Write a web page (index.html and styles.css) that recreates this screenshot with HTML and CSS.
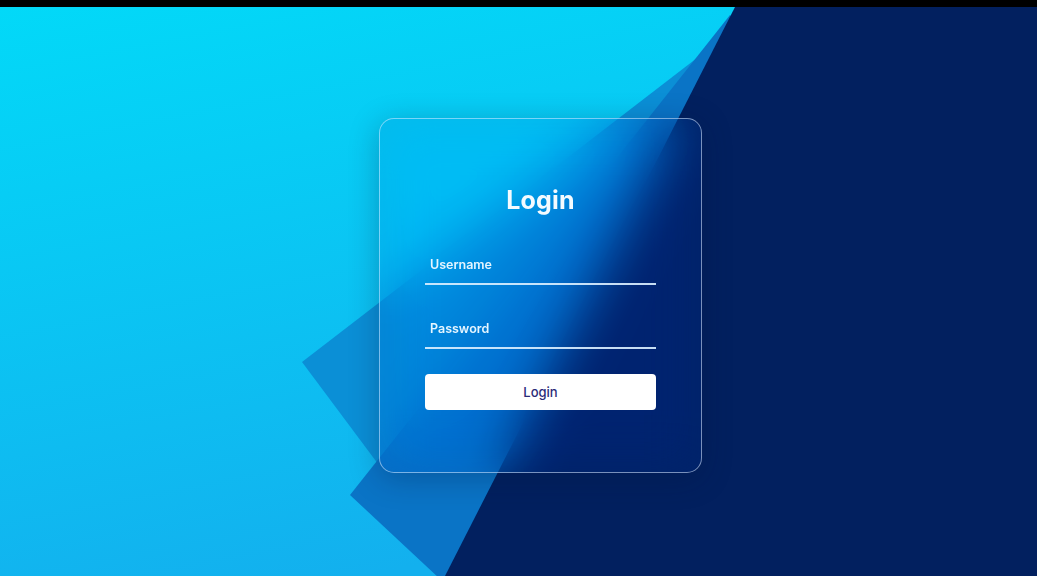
FILE: index.html
```html
<!DOCTYPE html>
<html lang="en">
<head>
<meta charset="utf-8">
<title>Login</title>
<link rel="stylesheet" href="styles.css">
</head>
<body>
<div class="topbar"></div>
<main class="scene">
  <svg class="backdrop" width="1037" height="569" viewBox="0 0 1037 569" aria-hidden="true">
    <defs>
      <linearGradient id="cyan" x1="0" y1="0" x2="0.35" y2="1">
        <stop offset="0" stop-color="#02d9f8"/>
        <stop offset="1" stop-color="#13b0ee"/>
      </linearGradient>
    </defs>
    <rect x="0" y="0" width="1037" height="569" fill="url(#cyan)"/>
    <polygon points="302,355 745,14 960,300 440,540" fill="#0b8fd6"/>
    <polygon points="350,488 730,8 1000,300 470,600" fill="#0a74c6"/>
    <polygon points="735,0 1037,0 1037,569 445,569" fill="#02205f"/>
  </svg>
  <form class="card">
    <h1 class="title">Login</h1>
    <input class="field" type="text" placeholder="Username">
    <input class="field" type="password" placeholder="Password">
    <button class="submit" type="button">Login</button>
  </form>
</main>
</body>
</html>
```
FILE: styles.css
```css
* { box-sizing: border-box; }

html, body {
  margin: 0;
  padding: 0;
  background: #000;
}

body {
  width: 1037px;
  height: 576px;
  overflow: hidden;
  font-family: Inter, "Open Sans", "Liberation Sans", sans-serif;
}

.topbar {
  height: 7px;
  background: #000;
}

.scene {
  position: relative;
  height: 569px;
  overflow: hidden;
  padding: 111px 0 0 379px;
}

.backdrop {
  position: absolute;
  left: 0;
  top: 0;
  z-index: 0;
}

.card {
  position: relative;
  z-index: 1;
  width: 323px;
  height: 355px;
  padding: 66px 45px 0;
  border: 1px solid rgba(220, 235, 255, 0.55);
  border-radius: 15px;
  background: rgba(0, 55, 165, 0.12);
  backdrop-filter: blur(26px) saturate(1.15);
  -webkit-backdrop-filter: blur(26px) saturate(1.15);
  box-shadow: 0 6px 30px rgba(0, 20, 60, 0.28);
  display: flex;
  flex-direction: column;
}

.title {
  margin: 0 0 30px;
  height: 30px;
  line-height: 30px;
  font-size: 25px;
  font-weight: 700;
  color: #f4fbff;
  text-align: center;
  letter-spacing: 0.2px;
}

.field {
  display: block;
  width: 100%;
  height: 40px;
  margin: 0 0 24px;
  padding: 0 0 0 5px;
  border: 0;
  border-bottom: 2px solid rgba(215, 238, 255, 0.92);
  background: transparent;
  outline: none;
  font-family: inherit;
  font-size: 12.5px;
  font-weight: 600;
  color: #eaf7ff;
}

.field::placeholder {
  color: #e4f5ff;
  opacity: 1;
}

.submit {
  display: block;
  width: 100%;
  height: 36px;
  margin-top: 1px;
  border: 0;
  border-radius: 4px;
  background: #fff;
  font-family: inherit;
  font-size: 13px;
  font-weight: 500;
  color: #2a2b78;
  cursor: pointer;
}
```
